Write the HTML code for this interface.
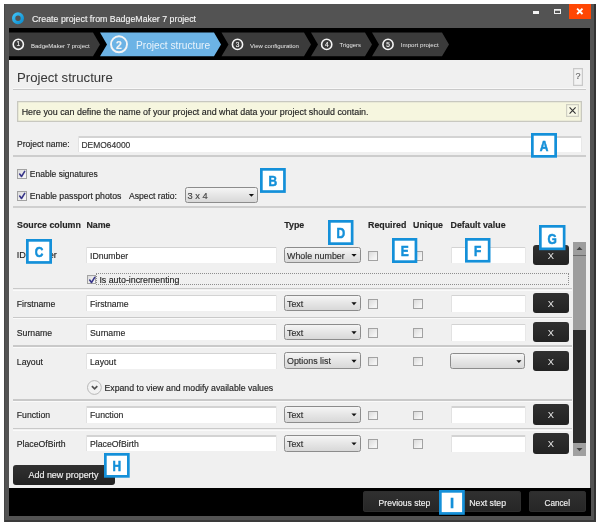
<!DOCTYPE html>
<html><head><meta charset="utf-8"><style>
html,body{margin:0;padding:0;background:#fff;width:600px;height:527px;overflow:hidden}
body{position:relative;font-family:"Liberation Sans",sans-serif}
.t{position:absolute;white-space:nowrap;-webkit-text-stroke:0.15px currentColor}
.b{position:absolute}
.lab{background:#fff;border:2.6px solid #118bd7;box-sizing:border-box;color:#118bd7;font-weight:700;font-size:14px;text-align:center;font-family:"Liberation Sans",sans-serif}
</style></head><body><div id="w" style="position:absolute;left:0;top:0;width:600px;height:527px;background:#fff;filter:blur(0.3px)">
<div class="b" style="left:4px;top:4px;width:591.5px;height:517.5px;background:#535353"></div>
<div class="b" style="left:593.9px;top:4px;width:1.7000000000000455px;height:517.6px;background:#333"></div>
<div class="b" style="left:4px;top:520.4px;width:591.6px;height:1.2000000000000455px;background:#3a3a3a"></div>
<div class="b" style="left:4px;top:4px;width:1px;height:517.6px;background:#474747"></div>
<svg class="b" style="left:10px;top:10px" width="16" height="16" viewBox="0 0 16 16"><defs><linearGradient id="lg" x1="0" y1="0" x2="1" y2="1"><stop offset="0" stop-color="#3cc0f5"/><stop offset="1" stop-color="#0e8fd0"/></linearGradient></defs><circle cx="8" cy="8.3" r="4.35" fill="none" stroke="url(#lg)" stroke-width="3.3"/></svg>
<div class="t" style="left:31.7px;top:14.02px;font-size:9.9px;line-height:9.9px;color:#f2f2f2;font-weight:400;transform:scaleX(0.892);transform-origin:0 0;">Create project from BadgeMaker 7 project</div>
<div class="b" style="left:533px;top:11.1px;width:6px;height:2.700000000000001px;background:#f4f4f4"></div>
<div class="b" style="left:554px;top:8.9px;width:6.600000000000023px;height:5.6px;box-shadow:inset 0 0 0 1px #eee,inset 0 1.7px 0 #eee"></div>
<div class="b" style="left:568.6px;top:4px;width:22.600000000000023px;height:14.8px;background:#ff4704"></div>
<svg class="b" style="left:0;top:0" width="600" height="30"><path d="M577.1 8.6 L582.5 14 M582.5 8.6 L577.1 14" stroke="#fff" stroke-width="1.9"/></svg>
<div class="b" style="left:9px;top:28px;width:581px;height:31.5px;background:#000"></div>
<svg class="b" style="left:0;top:0" width="600" height="70"><polygon points="9.00,32.50 93.00,32.50 100.00,44.40 93.00,56.30 9.00,56.30" fill="#3b3b3b"/></svg>
<svg class="b" style="left:0;top:0" width="600" height="70"><polygon points="100.00,32.50 214.00,32.50 221.00,44.40 214.00,56.30 100.00,56.30 107.00,44.40" fill="#6cb3e5"/></svg>
<svg class="b" style="left:0;top:0" width="600" height="70"><polygon points="221.50,32.50 304.00,32.50 311.00,44.40 304.00,56.30 221.50,56.30 228.50,44.40" fill="#3b3b3b"/></svg>
<svg class="b" style="left:0;top:0" width="600" height="70"><polygon points="311.00,32.50 365.00,32.50 372.00,44.40 365.00,56.30 311.00,56.30 318.00,44.40" fill="#3b3b3b"/></svg>
<svg class="b" style="left:0;top:0" width="600" height="70"><polygon points="372.00,32.50 442.00,32.50 449.00,44.40 442.00,56.30 372.00,56.30 379.00,44.40" fill="#3b3b3b"/></svg>
<svg class="b" style="left:0;top:0" width="600" height="70"><circle cx="18.3" cy="44.3" r="5.1" fill="none" stroke="#f4f4f4" stroke-width="1.6"/></svg>
<div class="t" style="left:8.3px;top:41.45px;width:20px;text-align:center;font-size:6.5px;line-height:6.5px;color:#f4f4f4;font-weight:400">1</div>
<svg class="b" style="left:0;top:0" width="600" height="70"><circle cx="119" cy="44.3" r="8.0" fill="none" stroke="#f4f4f4" stroke-width="1.9"/></svg>
<div class="t" style="left:109px;top:39.65px;width:20px;text-align:center;font-size:10.5px;line-height:10.5px;color:#f4f4f4;font-weight:700">2</div>
<svg class="b" style="left:0;top:0" width="600" height="70"><circle cx="237.5" cy="44.4" r="5.1" fill="none" stroke="#f4f4f4" stroke-width="1.6"/></svg>
<div class="t" style="left:227.5px;top:41.55px;width:20px;text-align:center;font-size:6.5px;line-height:6.5px;color:#f4f4f4;font-weight:400">3</div>
<svg class="b" style="left:0;top:0" width="600" height="70"><circle cx="326.7" cy="44.4" r="5.1" fill="none" stroke="#f4f4f4" stroke-width="1.6"/></svg>
<div class="t" style="left:316.7px;top:41.55px;width:20px;text-align:center;font-size:6.5px;line-height:6.5px;color:#f4f4f4;font-weight:400">4</div>
<svg class="b" style="left:0;top:0" width="600" height="70"><circle cx="388" cy="44.4" r="5.1" fill="none" stroke="#f4f4f4" stroke-width="1.6"/></svg>
<div class="t" style="left:378px;top:41.55px;width:20px;text-align:center;font-size:6.5px;line-height:6.5px;color:#f4f4f4;font-weight:400">5</div>
<div class="t" style="left:31px;top:42.52px;font-size:6px;line-height:6px;color:#e8e8e8;font-weight:400;-webkit-text-stroke:0;">BadgeMaker 7 project</div>
<div class="t" style="left:135.5px;top:39.71px;font-size:10.5px;line-height:10.5px;color:#e9f3fb;font-weight:400;transform:scaleX(0.97);transform-origin:0 0;-webkit-text-stroke:0;">Project structure</div>
<div class="t" style="left:250px;top:42.52px;font-size:6px;line-height:6px;color:#e8e8e8;font-weight:400;-webkit-text-stroke:0;">View configuration</div>
<div class="t" style="left:339.5px;top:42.61px;font-size:5.9px;line-height:5.9px;color:#e8e8e8;font-weight:400;-webkit-text-stroke:0;">Triggers</div>
<div class="t" style="left:400.8px;top:42.35px;font-size:6.2px;line-height:6.2px;color:#e8e8e8;font-weight:400;-webkit-text-stroke:0;">Import project</div>
<div class="b" style="left:9px;top:59.5px;width:581px;height:429.0px;background:#f0f0f0"></div>
<div class="t" style="left:17.3px;top:71.47px;font-size:13.5px;line-height:13.5px;color:#383838;font-weight:400;transform:scaleX(0.975);transform-origin:0 0;-webkit-text-stroke:0.05px #383838;">Project structure</div>
<div class="b" style="left:572.8px;top:68px;width:10.600000000000023px;height:18px;background:#f3f3f3;box-shadow:inset 0 0 0 1.2px #c9c9c9"></div>
<div class="t" style="left:575.6px;top:72.28px;font-size:9px;line-height:9px;color:#666;font-weight:400;">?</div>
<div class="b" style="left:13px;top:88.5px;width:573px;height:1.7000000000000028px;background:#c9c9c9"></div>
<div class="b" style="left:13px;top:87.6px;width:573px;height:0.9000000000000057px;background:#f8f8f8"></div>
<div class="b" style="left:17px;top:101.2px;width:565.3px;height:20.799999999999997px;background:#f6f6df;box-shadow:inset 0 0 0 1.3px #c8c8c0"></div>
<div class="t" style="left:21.7px;top:108.08px;font-size:8.88px;line-height:8.88px;color:#242424;font-weight:400;">Here you can define the name of your project and what data your project should contain.</div>
<div class="b" style="left:566px;top:104.2px;width:13px;height:13.099999999999994px;background:#f8f8e6;box-shadow:inset 0 0 0 1.2px #cfcfc2"></div>
<svg class="b" style="left:566px;top:104px" width="13" height="13" viewBox="0 0 13 13"><path d="M3.6 3.4 L9.6 9.6 M9.6 3.4 L3.6 9.6" stroke="#333" stroke-width="1.1"/></svg>
<div class="t" style="left:17px;top:140.45px;font-size:8.56px;line-height:8.56px;color:#242424;font-weight:400;">Project name:</div>
<div class="b" style="left:77.5px;top:136.4px;width:504.5px;height:15.199999999999989px;background:#fff"></div>
<div class="b" style="left:77.5px;top:136.4px;width:504.5px;height:1.3000000000000114px;background:#d3d3d3"></div>
<div class="b" style="left:77.5px;top:136.4px;width:1.0px;height:15.199999999999989px;background:#e2e2e2"></div>
<div class="b" style="left:581px;top:136.4px;width:1px;height:15.199999999999989px;background:#e8e8e8"></div>
<div class="t" style="left:81.5px;top:140.55px;font-size:8.45px;line-height:8.45px;color:#333;font-weight:400;">DEMO64000</div>
<div class="b" style="left:13px;top:155.1px;width:573px;height:1.700000000000017px;background:#cdcdcd"></div>
<div class="b" style="left:16.8px;top:169.2px;width:9.8px;height:9.800000000000011px;box-shadow:inset 0 0 0 1px #a2a2a2;background:linear-gradient(135deg,#d6d6d6,#f4f4f4 70%)"></div>
<svg class="b" style="left:16.8px;top:169.2px;overflow:visible" width="9.8" height="9.8" viewBox="0 0 9.8 9.8"><path d="M2.7 5.1 L4.5 7.5 L7.7 2.4" fill="none" stroke="#38368a" stroke-width="1.6" stroke-linecap="round" stroke-linejoin="round"/></svg>
<div class="t" style="left:29.8px;top:169.80px;font-size:8.5px;line-height:8.5px;color:#242424;font-weight:400;">Enable signatures</div>
<div class="b" style="left:16.8px;top:191.2px;width:9.8px;height:9.800000000000011px;box-shadow:inset 0 0 0 1px #a2a2a2;background:linear-gradient(135deg,#d6d6d6,#f4f4f4 70%)"></div>
<svg class="b" style="left:16.8px;top:191.2px;overflow:visible" width="9.8" height="9.8" viewBox="0 0 9.8 9.8"><path d="M2.7 5.1 L4.5 7.5 L7.7 2.4" fill="none" stroke="#38368a" stroke-width="1.6" stroke-linecap="round" stroke-linejoin="round"/></svg>
<div class="t" style="left:29.8px;top:191.52px;font-size:8.72px;line-height:8.72px;color:#242424;font-weight:400;">Enable passport photos</div>
<div class="t" style="left:129px;top:191.59px;font-size:8.64px;line-height:8.64px;color:#242424;font-weight:400;">Aspect ratio:</div>
<div class="b" style="left:184.5px;top:186.8px;width:73.5px;height:15.899999999999977px;border:1px solid #8c8c8c;border-radius:2.5px;background:linear-gradient(#f5f5f5,#e6e6e6 50%,#d8d8d8);box-sizing:border-box"></div>
<div class="t" style="left:187.5px;top:191.78px;font-size:9.3px;line-height:9.3px;color:#444;font-weight:400;">3 x 4</div>
<svg class="b" style="left:0;top:0;overflow:visible" width="1" height="1"><polygon points="248.80,193.95 254.00,193.95 251.40,196.75" fill="#111"/></svg>
<div class="b" style="left:13px;top:205.9px;width:573px;height:1.700000000000017px;background:#cfcfcf"></div>
<div class="t" style="left:17px;top:221.01px;font-size:8.85px;line-height:8.85px;color:#262626;font-weight:700;">Source column</div>
<div class="t" style="left:86.4px;top:221.01px;font-size:8.85px;line-height:8.85px;color:#262626;font-weight:700;">Name</div>
<div class="t" style="left:284.3px;top:221.01px;font-size:8.85px;line-height:8.85px;color:#262626;font-weight:700;">Type</div>
<div class="t" style="left:368px;top:221.01px;font-size:8.85px;line-height:8.85px;color:#262626;font-weight:700;">Required</div>
<div class="t" style="left:413px;top:221.01px;font-size:8.85px;line-height:8.85px;color:#262626;font-weight:700;">Unique</div>
<div class="t" style="left:450.5px;top:221.01px;font-size:8.85px;line-height:8.85px;color:#262626;font-weight:700;">Default value</div>
<div class="t" style="left:16.8px;top:251.40px;font-size:9.1px;line-height:9.1px;color:#242424;font-weight:400;">IDnumber</div>
<div class="b" style="left:86.4px;top:246.9px;width:190.20000000000002px;height:16.200000000000017px;background:#fff"></div>
<div class="b" style="left:86.4px;top:246.9px;width:190.20000000000002px;height:1.3000000000000114px;background:#d3d3d3"></div>
<div class="b" style="left:86.4px;top:246.9px;width:1.0px;height:16.200000000000017px;background:#e2e2e2"></div>
<div class="b" style="left:275.6px;top:246.9px;width:1.0px;height:16.200000000000017px;background:#e8e8e8"></div>
<div class="t" style="left:90px;top:251.74px;font-size:8.7px;line-height:8.7px;color:#2a2a2a;font-weight:400;">IDnumber</div>
<div class="b" style="left:284px;top:246.6px;width:76.60000000000002px;height:16.50000000000003px;border:1px solid #8c8c8c;border-radius:2.5px;background:linear-gradient(#f5f5f5,#e6e6e6 50%,#d8d8d8);box-sizing:border-box"></div>
<div class="t" style="left:287px;top:251.62px;font-size:8.9px;line-height:8.9px;color:#2e2e2e;font-weight:400;">Whole number</div>
<svg class="b" style="left:0;top:0;overflow:visible" width="1" height="1"><polygon points="351.40,254.05 356.60,254.05 354.00,256.85" fill="#111"/></svg>
<div class="b" style="left:368px;top:251.0px;width:9.5px;height:9.5px;box-shadow:inset 0 0 0 1px #a2a2a2;background:linear-gradient(135deg,#d6d6d6,#f4f4f4 70%)"></div>
<div class="b" style="left:413px;top:251.0px;width:9.5px;height:9.5px;box-shadow:inset 0 0 0 1px #a2a2a2;background:linear-gradient(135deg,#d6d6d6,#f4f4f4 70%)"></div>
<div class="b" style="left:450.6px;top:246.9px;width:75.19999999999993px;height:16.400000000000006px;background:#fff"></div>
<div class="b" style="left:450.6px;top:246.9px;width:75.19999999999993px;height:1.3000000000000114px;background:#d3d3d3"></div>
<div class="b" style="left:450.6px;top:246.9px;width:1.0px;height:16.400000000000006px;background:#e2e2e2"></div>
<div class="b" style="left:524.8px;top:246.9px;width:1.0px;height:16.400000000000006px;background:#e8e8e8"></div>
<div class="b" style="left:532.8px;top:244.9px;width:36.30000000000007px;height:20.299999999999983px;background:linear-gradient(#303030,#222);border-radius:3px"></div>
<div class="t" style="left:532.8px;top:250.70px;width:36.3px;text-align:center;font-size:9.4px;line-height:9.4px;color:#ececec;-webkit-text-stroke:0">X</div>
<div class="b" style="left:86.5px;top:275px;width:9.400000000000006px;height:9.399999999999977px;box-shadow:inset 0 0 0 1px #a2a2a2;background:linear-gradient(135deg,#d6d6d6,#f4f4f4 70%)"></div>
<svg class="b" style="left:86.5px;top:275px;overflow:visible" width="9.4" height="9.4" viewBox="0 0 9.4 9.4"><path d="M2.7 5.1 L4.5 7.5 L7.7 2.4" fill="none" stroke="#38368a" stroke-width="1.6" stroke-linecap="round" stroke-linejoin="round"/></svg>
<div class="b" style="left:96.4px;top:273.3px;width:472.6px;height:11.699999999999989px;border:1px dotted #8e8e8e;box-sizing:border-box"></div>
<div class="t" style="left:99.4px;top:275.63px;font-size:8.83px;line-height:8.83px;color:#242424;font-weight:400;">Is auto-incrementing</div>
<div class="b" style="left:13px;top:287.8px;width:558.5px;height:1.6999999999999886px;background:#c9c9c9"></div>
<div class="b" style="left:13px;top:289.5px;width:558.5px;height:1.0px;background:#fafafa"></div>
<div class="t" style="left:16.8px;top:300.04px;font-size:8.7px;line-height:8.7px;color:#242424;font-weight:400;">Firstname</div>
<div class="b" style="left:86.4px;top:295.2px;width:190.20000000000002px;height:16.19999999999999px;background:#fff"></div>
<div class="b" style="left:86.4px;top:295.2px;width:190.20000000000002px;height:1.3000000000000114px;background:#d3d3d3"></div>
<div class="b" style="left:86.4px;top:295.2px;width:1.0px;height:16.19999999999999px;background:#e2e2e2"></div>
<div class="b" style="left:275.6px;top:295.2px;width:1.0px;height:16.19999999999999px;background:#e8e8e8"></div>
<div class="t" style="left:90px;top:300.04px;font-size:8.7px;line-height:8.7px;color:#2a2a2a;font-weight:400;">Firstname</div>
<div class="b" style="left:284px;top:294.9px;width:76.60000000000002px;height:16.5px;border:1px solid #8c8c8c;border-radius:2.5px;background:linear-gradient(#f5f5f5,#e6e6e6 50%,#d8d8d8);box-sizing:border-box"></div>
<div class="t" style="left:287px;top:299.92px;font-size:8.9px;line-height:8.9px;color:#2e2e2e;font-weight:400;">Text</div>
<svg class="b" style="left:0;top:0;overflow:visible" width="1" height="1"><polygon points="351.40,302.35 356.60,302.35 354.00,305.15" fill="#111"/></svg>
<div class="b" style="left:368px;top:299.3px;width:9.5px;height:9.5px;box-shadow:inset 0 0 0 1px #a2a2a2;background:linear-gradient(135deg,#d6d6d6,#f4f4f4 70%)"></div>
<div class="b" style="left:413px;top:299.3px;width:9.5px;height:9.5px;box-shadow:inset 0 0 0 1px #a2a2a2;background:linear-gradient(135deg,#d6d6d6,#f4f4f4 70%)"></div>
<div class="b" style="left:450.6px;top:295.2px;width:75.19999999999993px;height:16.399999999999977px;background:#fff"></div>
<div class="b" style="left:450.6px;top:295.2px;width:75.19999999999993px;height:1.3000000000000114px;background:#d3d3d3"></div>
<div class="b" style="left:450.6px;top:295.2px;width:1.0px;height:16.399999999999977px;background:#e2e2e2"></div>
<div class="b" style="left:524.8px;top:295.2px;width:1.0px;height:16.399999999999977px;background:#e8e8e8"></div>
<div class="b" style="left:532.8px;top:293.2px;width:36.30000000000007px;height:20.30000000000001px;background:linear-gradient(#303030,#222);border-radius:3px"></div>
<div class="t" style="left:532.8px;top:299.00px;width:36.3px;text-align:center;font-size:9.4px;line-height:9.4px;color:#ececec;-webkit-text-stroke:0">X</div>
<div class="b" style="left:13px;top:316.70000000000005px;width:558.5px;height:1.6999999999999886px;background:#c9c9c9"></div>
<div class="b" style="left:13px;top:318.40000000000003px;width:558.5px;height:1.0px;background:#fafafa"></div>
<div class="t" style="left:16.8px;top:329.04px;font-size:8.7px;line-height:8.7px;color:#242424;font-weight:400;">Surname</div>
<div class="b" style="left:86.4px;top:324.2px;width:190.20000000000002px;height:16.19999999999999px;background:#fff"></div>
<div class="b" style="left:86.4px;top:324.2px;width:190.20000000000002px;height:1.3000000000000114px;background:#d3d3d3"></div>
<div class="b" style="left:86.4px;top:324.2px;width:1.0px;height:16.19999999999999px;background:#e2e2e2"></div>
<div class="b" style="left:275.6px;top:324.2px;width:1.0px;height:16.19999999999999px;background:#e8e8e8"></div>
<div class="t" style="left:90px;top:329.04px;font-size:8.7px;line-height:8.7px;color:#2a2a2a;font-weight:400;">Surname</div>
<div class="b" style="left:284px;top:323.9px;width:76.60000000000002px;height:16.5px;border:1px solid #8c8c8c;border-radius:2.5px;background:linear-gradient(#f5f5f5,#e6e6e6 50%,#d8d8d8);box-sizing:border-box"></div>
<div class="t" style="left:287px;top:328.92px;font-size:8.9px;line-height:8.9px;color:#2e2e2e;font-weight:400;">Text</div>
<svg class="b" style="left:0;top:0;overflow:visible" width="1" height="1"><polygon points="351.40,331.35 356.60,331.35 354.00,334.15" fill="#111"/></svg>
<div class="b" style="left:368px;top:328.3px;width:9.5px;height:9.5px;box-shadow:inset 0 0 0 1px #a2a2a2;background:linear-gradient(135deg,#d6d6d6,#f4f4f4 70%)"></div>
<div class="b" style="left:413px;top:328.3px;width:9.5px;height:9.5px;box-shadow:inset 0 0 0 1px #a2a2a2;background:linear-gradient(135deg,#d6d6d6,#f4f4f4 70%)"></div>
<div class="b" style="left:450.6px;top:324.2px;width:75.19999999999993px;height:16.399999999999977px;background:#fff"></div>
<div class="b" style="left:450.6px;top:324.2px;width:75.19999999999993px;height:1.3000000000000114px;background:#d3d3d3"></div>
<div class="b" style="left:450.6px;top:324.2px;width:1.0px;height:16.399999999999977px;background:#e2e2e2"></div>
<div class="b" style="left:524.8px;top:324.2px;width:1.0px;height:16.399999999999977px;background:#e8e8e8"></div>
<div class="b" style="left:532.8px;top:322.2px;width:36.30000000000007px;height:20.30000000000001px;background:linear-gradient(#303030,#222);border-radius:3px"></div>
<div class="t" style="left:532.8px;top:328.00px;width:36.3px;text-align:center;font-size:9.4px;line-height:9.4px;color:#ececec;-webkit-text-stroke:0">X</div>
<div class="b" style="left:13px;top:345.40000000000003px;width:558.5px;height:1.6999999999999886px;background:#c9c9c9"></div>
<div class="b" style="left:13px;top:347.1px;width:558.5px;height:1.0px;background:#fafafa"></div>
<div class="t" style="left:16.8px;top:357.54px;font-size:8.7px;line-height:8.7px;color:#242424;font-weight:400;">Layout</div>
<div class="b" style="left:86.4px;top:352.7px;width:190.20000000000002px;height:16.19999999999999px;background:#fff"></div>
<div class="b" style="left:86.4px;top:352.7px;width:190.20000000000002px;height:1.3000000000000114px;background:#d3d3d3"></div>
<div class="b" style="left:86.4px;top:352.7px;width:1.0px;height:16.19999999999999px;background:#e2e2e2"></div>
<div class="b" style="left:275.6px;top:352.7px;width:1.0px;height:16.19999999999999px;background:#e8e8e8"></div>
<div class="t" style="left:90px;top:357.54px;font-size:8.7px;line-height:8.7px;color:#2a2a2a;font-weight:400;">Layout</div>
<div class="b" style="left:284px;top:352.4px;width:76.60000000000002px;height:16.5px;border:1px solid #8c8c8c;border-radius:2.5px;background:linear-gradient(#f5f5f5,#e6e6e6 50%,#d8d8d8);box-sizing:border-box"></div>
<div class="t" style="left:287px;top:357.42px;font-size:8.9px;line-height:8.9px;color:#2e2e2e;font-weight:400;">Options list</div>
<svg class="b" style="left:0;top:0;overflow:visible" width="1" height="1"><polygon points="351.40,359.85 356.60,359.85 354.00,362.65" fill="#111"/></svg>
<div class="b" style="left:368px;top:356.8px;width:9.5px;height:9.5px;box-shadow:inset 0 0 0 1px #a2a2a2;background:linear-gradient(135deg,#d6d6d6,#f4f4f4 70%)"></div>
<div class="b" style="left:413px;top:356.8px;width:9.5px;height:9.5px;box-shadow:inset 0 0 0 1px #a2a2a2;background:linear-gradient(135deg,#d6d6d6,#f4f4f4 70%)"></div>
<div class="b" style="left:450.4px;top:352.7px;width:75.10000000000002px;height:16.600000000000023px;border:1px solid #8c8c8c;border-radius:2.5px;background:linear-gradient(#f5f5f5,#e6e6e6 50%,#d8d8d8);box-sizing:border-box"></div>
<svg class="b" style="left:0;top:0;overflow:visible" width="1" height="1"><polygon points="516.30,360.20 521.50,360.20 518.90,363.00" fill="#111"/></svg>
<div class="b" style="left:532.8px;top:350.7px;width:36.30000000000007px;height:20.30000000000001px;background:linear-gradient(#303030,#222);border-radius:3px"></div>
<div class="t" style="left:532.8px;top:356.50px;width:36.3px;text-align:center;font-size:9.4px;line-height:9.4px;color:#ececec;-webkit-text-stroke:0">X</div>
<svg class="b" style="left:0;top:0" width="600" height="527"><circle cx="94.4" cy="387.5" r="6.9" fill="#f2f2f2" stroke="#b8b8b8" stroke-width="1"/><path d="M91.9 386.2 L94.6 388.9 L97.3 386.2" fill="none" stroke="#505050" stroke-width="1.7"/></svg>
<div class="t" style="left:104.5px;top:384.32px;font-size:8.72px;line-height:8.72px;color:#242424;font-weight:400;">Expand to view and modify available values</div>
<div class="b" style="left:13px;top:398.90000000000003px;width:558.5px;height:1.6999999999999886px;background:#c9c9c9"></div>
<div class="b" style="left:13px;top:400.6px;width:558.5px;height:1.0px;background:#fafafa"></div>
<div class="t" style="left:16.8px;top:411.24px;font-size:8.7px;line-height:8.7px;color:#242424;font-weight:400;">Function</div>
<div class="b" style="left:86.4px;top:406.4px;width:190.20000000000002px;height:16.19999999999999px;background:#fff"></div>
<div class="b" style="left:86.4px;top:406.4px;width:190.20000000000002px;height:1.3000000000000114px;background:#d3d3d3"></div>
<div class="b" style="left:86.4px;top:406.4px;width:1.0px;height:16.19999999999999px;background:#e2e2e2"></div>
<div class="b" style="left:275.6px;top:406.4px;width:1.0px;height:16.19999999999999px;background:#e8e8e8"></div>
<div class="t" style="left:90px;top:411.24px;font-size:8.7px;line-height:8.7px;color:#2a2a2a;font-weight:400;">Function</div>
<div class="b" style="left:284px;top:406.09999999999997px;width:76.60000000000002px;height:16.5px;border:1px solid #8c8c8c;border-radius:2.5px;background:linear-gradient(#f5f5f5,#e6e6e6 50%,#d8d8d8);box-sizing:border-box"></div>
<div class="t" style="left:287px;top:411.12px;font-size:8.9px;line-height:8.9px;color:#2e2e2e;font-weight:400;">Text</div>
<svg class="b" style="left:0;top:0;overflow:visible" width="1" height="1"><polygon points="351.40,413.55 356.60,413.55 354.00,416.35" fill="#111"/></svg>
<div class="b" style="left:368px;top:410.5px;width:9.5px;height:9.5px;box-shadow:inset 0 0 0 1px #a2a2a2;background:linear-gradient(135deg,#d6d6d6,#f4f4f4 70%)"></div>
<div class="b" style="left:413px;top:410.5px;width:9.5px;height:9.5px;box-shadow:inset 0 0 0 1px #a2a2a2;background:linear-gradient(135deg,#d6d6d6,#f4f4f4 70%)"></div>
<div class="b" style="left:450.6px;top:406.4px;width:75.19999999999993px;height:16.399999999999977px;background:#fff"></div>
<div class="b" style="left:450.6px;top:406.4px;width:75.19999999999993px;height:1.3000000000000114px;background:#d3d3d3"></div>
<div class="b" style="left:450.6px;top:406.4px;width:1.0px;height:16.399999999999977px;background:#e2e2e2"></div>
<div class="b" style="left:524.8px;top:406.4px;width:1.0px;height:16.399999999999977px;background:#e8e8e8"></div>
<div class="b" style="left:532.8px;top:404.4px;width:36.30000000000007px;height:20.30000000000001px;background:linear-gradient(#303030,#222);border-radius:3px"></div>
<div class="t" style="left:532.8px;top:410.20px;width:36.3px;text-align:center;font-size:9.4px;line-height:9.4px;color:#ececec;-webkit-text-stroke:0">X</div>
<div class="b" style="left:13px;top:427.8px;width:558.5px;height:1.6999999999999886px;background:#c9c9c9"></div>
<div class="b" style="left:13px;top:429.5px;width:558.5px;height:1.0px;background:#fafafa"></div>
<div class="t" style="left:16.8px;top:440.14px;font-size:8.7px;line-height:8.7px;color:#242424;font-weight:400;">PlaceOfBirth</div>
<div class="b" style="left:86.4px;top:435.3px;width:190.20000000000002px;height:16.19999999999999px;background:#fff"></div>
<div class="b" style="left:86.4px;top:435.3px;width:190.20000000000002px;height:1.3000000000000114px;background:#d3d3d3"></div>
<div class="b" style="left:86.4px;top:435.3px;width:1.0px;height:16.19999999999999px;background:#e2e2e2"></div>
<div class="b" style="left:275.6px;top:435.3px;width:1.0px;height:16.19999999999999px;background:#e8e8e8"></div>
<div class="t" style="left:90px;top:440.14px;font-size:8.7px;line-height:8.7px;color:#2a2a2a;font-weight:400;">PlaceOfBirth</div>
<div class="b" style="left:284px;top:435.0px;width:76.60000000000002px;height:16.5px;border:1px solid #8c8c8c;border-radius:2.5px;background:linear-gradient(#f5f5f5,#e6e6e6 50%,#d8d8d8);box-sizing:border-box"></div>
<div class="t" style="left:287px;top:440.02px;font-size:8.9px;line-height:8.9px;color:#2e2e2e;font-weight:400;">Text</div>
<svg class="b" style="left:0;top:0;overflow:visible" width="1" height="1"><polygon points="351.40,442.45 356.60,442.45 354.00,445.25" fill="#111"/></svg>
<div class="b" style="left:368px;top:439.40000000000003px;width:9.5px;height:9.5px;box-shadow:inset 0 0 0 1px #a2a2a2;background:linear-gradient(135deg,#d6d6d6,#f4f4f4 70%)"></div>
<div class="b" style="left:413px;top:439.40000000000003px;width:9.5px;height:9.5px;box-shadow:inset 0 0 0 1px #a2a2a2;background:linear-gradient(135deg,#d6d6d6,#f4f4f4 70%)"></div>
<div class="b" style="left:450.6px;top:435.3px;width:75.19999999999993px;height:16.399999999999977px;background:#fff"></div>
<div class="b" style="left:450.6px;top:435.3px;width:75.19999999999993px;height:1.3000000000000114px;background:#d3d3d3"></div>
<div class="b" style="left:450.6px;top:435.3px;width:1.0px;height:16.399999999999977px;background:#e2e2e2"></div>
<div class="b" style="left:524.8px;top:435.3px;width:1.0px;height:16.399999999999977px;background:#e8e8e8"></div>
<div class="b" style="left:532.8px;top:433.3px;width:36.30000000000007px;height:20.30000000000001px;background:linear-gradient(#303030,#222);border-radius:3px"></div>
<div class="t" style="left:532.8px;top:439.10px;width:36.3px;text-align:center;font-size:9.4px;line-height:9.4px;color:#ececec;-webkit-text-stroke:0">X</div>
<div class="b" style="left:572.9px;top:241.5px;width:13.100000000000023px;height:214.5px;background:#2d2d2d"></div>
<div class="b" style="left:572.9px;top:241.5px;width:13.100000000000023px;height:88.5px;background:#9d9d9d"></div>
<div class="b" style="left:572.9px;top:254.5px;width:13.100000000000023px;height:1.0999999999999943px;background:#6a6a6a"></div>
<svg class="b" style="left:0;top:0" width="600" height="527"><polygon points="576.5,250 582.5,250 579.5,246.8" fill="#444"/></svg>
<div class="b" style="left:572.9px;top:443px;width:13.100000000000023px;height:13px;background:#a0a0a0"></div>
<svg class="b" style="left:0;top:0" width="600" height="527"><polygon points="576.5,448 582.5,448 579.5,451.2" fill="#444"/></svg>
<div class="b" style="left:13.3px;top:464.6px;width:101.7px;height:20.19999999999999px;background:linear-gradient(#313131,#222);border-radius:3px"></div>
<div class="t" style="left:28.5px;top:471.42px;font-size:8.95px;line-height:8.95px;color:#f0f0f0;font-weight:400;">Add new property</div>
<div class="b" style="left:9px;top:487.8px;width:581.5px;height:28.400000000000034px;background:#000"></div>
<div class="b" style="left:363px;top:491.3px;width:79px;height:20.399999999999977px;background:linear-gradient(#303030,#262626);box-shadow:inset 0 0 0 1px #2e2e2e;border-radius:3px"></div>
<div class="t" style="left:378.6px;top:498.76px;font-size:8.55px;line-height:8.55px;color:#f0f0f0;font-weight:400;">Previous step</div>
<div class="b" style="left:440px;top:491.3px;width:81.39999999999998px;height:20.399999999999977px;background:linear-gradient(#303030,#262626);box-shadow:inset 0 0 0 1px #2e2e2e;border-radius:3px"></div>
<div class="t" style="left:469.3px;top:498.64px;font-size:8.7px;line-height:8.7px;color:#f0f0f0;font-weight:400;">Next step</div>
<div class="b" style="left:529.3px;top:491.3px;width:56.700000000000045px;height:20.399999999999977px;background:linear-gradient(#303030,#262626);box-shadow:inset 0 0 0 1px #2e2e2e;border-radius:3px"></div>
<div class="t" style="left:544.5px;top:499.66px;font-size:8.2px;line-height:8.2px;color:#f0f0f0;font-weight:400;">Cancel</div>
<svg class="b" style="left:531px;top:133px;overflow:visible" width="26.00" height="24.70"><rect x="1.35" y="1.35" width="23.30" height="22.00" fill="#fff" stroke="#1490d9" stroke-width="2.7"/></svg>
<div class="t" style="left:531px;top:139.05px;width:26.00px;text-align:center;font-size:14.6px;line-height:14.6px;color:#1490d9;font-weight:700;transform:scaleX(0.82);transform-origin:50% 0;-webkit-text-stroke:0.55px #1490d9">A</div>
<svg class="b" style="left:260px;top:167.6px;overflow:visible" width="25.80" height="24.90"><rect x="1.35" y="1.35" width="23.10" height="22.20" fill="#fff" stroke="#1490d9" stroke-width="2.7"/></svg>
<div class="t" style="left:260px;top:173.75px;width:25.80px;text-align:center;font-size:14.6px;line-height:14.6px;color:#1490d9;font-weight:700;transform:scaleX(0.82);transform-origin:50% 0;-webkit-text-stroke:0.55px #1490d9">B</div>
<svg class="b" style="left:26px;top:238.6px;overflow:visible" width="26.00" height="24.80"><rect x="1.35" y="1.35" width="23.30" height="22.10" fill="#fff" stroke="#1490d9" stroke-width="2.7"/></svg>
<div class="t" style="left:26px;top:244.70px;width:26.00px;text-align:center;font-size:14.6px;line-height:14.6px;color:#1490d9;font-weight:700;transform:scaleX(0.82);transform-origin:50% 0;-webkit-text-stroke:0.55px #1490d9">C</div>
<svg class="b" style="left:328px;top:220px;overflow:visible" width="25.50" height="25.00"><rect x="1.35" y="1.35" width="22.80" height="22.30" fill="#fff" stroke="#1490d9" stroke-width="2.7"/></svg>
<div class="t" style="left:328px;top:226.20px;width:25.50px;text-align:center;font-size:14.6px;line-height:14.6px;color:#1490d9;font-weight:700;transform:scaleX(0.82);transform-origin:50% 0;-webkit-text-stroke:0.55px #1490d9">D</div>
<svg class="b" style="left:391.7px;top:238px;overflow:visible" width="25.30" height="25.00"><rect x="1.35" y="1.35" width="22.60" height="22.30" fill="#fff" stroke="#1490d9" stroke-width="2.7"/></svg>
<div class="t" style="left:391.7px;top:244.20px;width:25.30px;text-align:center;font-size:14.6px;line-height:14.6px;color:#1490d9;font-weight:700;transform:scaleX(0.82);transform-origin:50% 0;-webkit-text-stroke:0.55px #1490d9">E</div>
<svg class="b" style="left:465.3px;top:237.8px;overflow:visible" width="25.50" height="24.60"><rect x="1.35" y="1.35" width="22.80" height="21.90" fill="#fff" stroke="#1490d9" stroke-width="2.7"/></svg>
<div class="t" style="left:465.3px;top:243.80px;width:25.50px;text-align:center;font-size:14.6px;line-height:14.6px;color:#1490d9;font-weight:700;transform:scaleX(0.82);transform-origin:50% 0;-webkit-text-stroke:0.55px #1490d9">F</div>
<svg class="b" style="left:539.2px;top:225.3px;overflow:visible" width="26.50" height="25.20"><rect x="1.35" y="1.35" width="23.80" height="22.50" fill="#fff" stroke="#1490d9" stroke-width="2.7"/></svg>
<div class="t" style="left:539.2px;top:231.60px;width:26.50px;text-align:center;font-size:14.6px;line-height:14.6px;color:#1490d9;font-weight:700;transform:scaleX(0.82);transform-origin:50% 0;-webkit-text-stroke:0.55px #1490d9">G</div>
<svg class="b" style="left:104.3px;top:453.3px;overflow:visible" width="25.70" height="24.70"><rect x="1.35" y="1.35" width="23.00" height="22.00" fill="#fff" stroke="#1490d9" stroke-width="2.7"/></svg>
<div class="t" style="left:104.3px;top:459.35px;width:25.70px;text-align:center;font-size:14.6px;line-height:14.6px;color:#1490d9;font-weight:700;transform:scaleX(0.82);transform-origin:50% 0;-webkit-text-stroke:0.55px #1490d9">H</div>
<svg class="b" style="left:439.2px;top:490px;overflow:visible" width="25.80" height="24.80"><rect x="1.35" y="1.35" width="23.10" height="22.10" fill="#fff" stroke="#1490d9" stroke-width="2.7"/></svg>
<div class="t" style="left:439.2px;top:496.10px;width:25.80px;text-align:center;font-size:14.6px;line-height:14.6px;color:#1490d9;font-weight:700;transform:scaleX(1.0);transform-origin:50% 0;-webkit-text-stroke:0.55px #1490d9">I</div>
</div></body></html>
